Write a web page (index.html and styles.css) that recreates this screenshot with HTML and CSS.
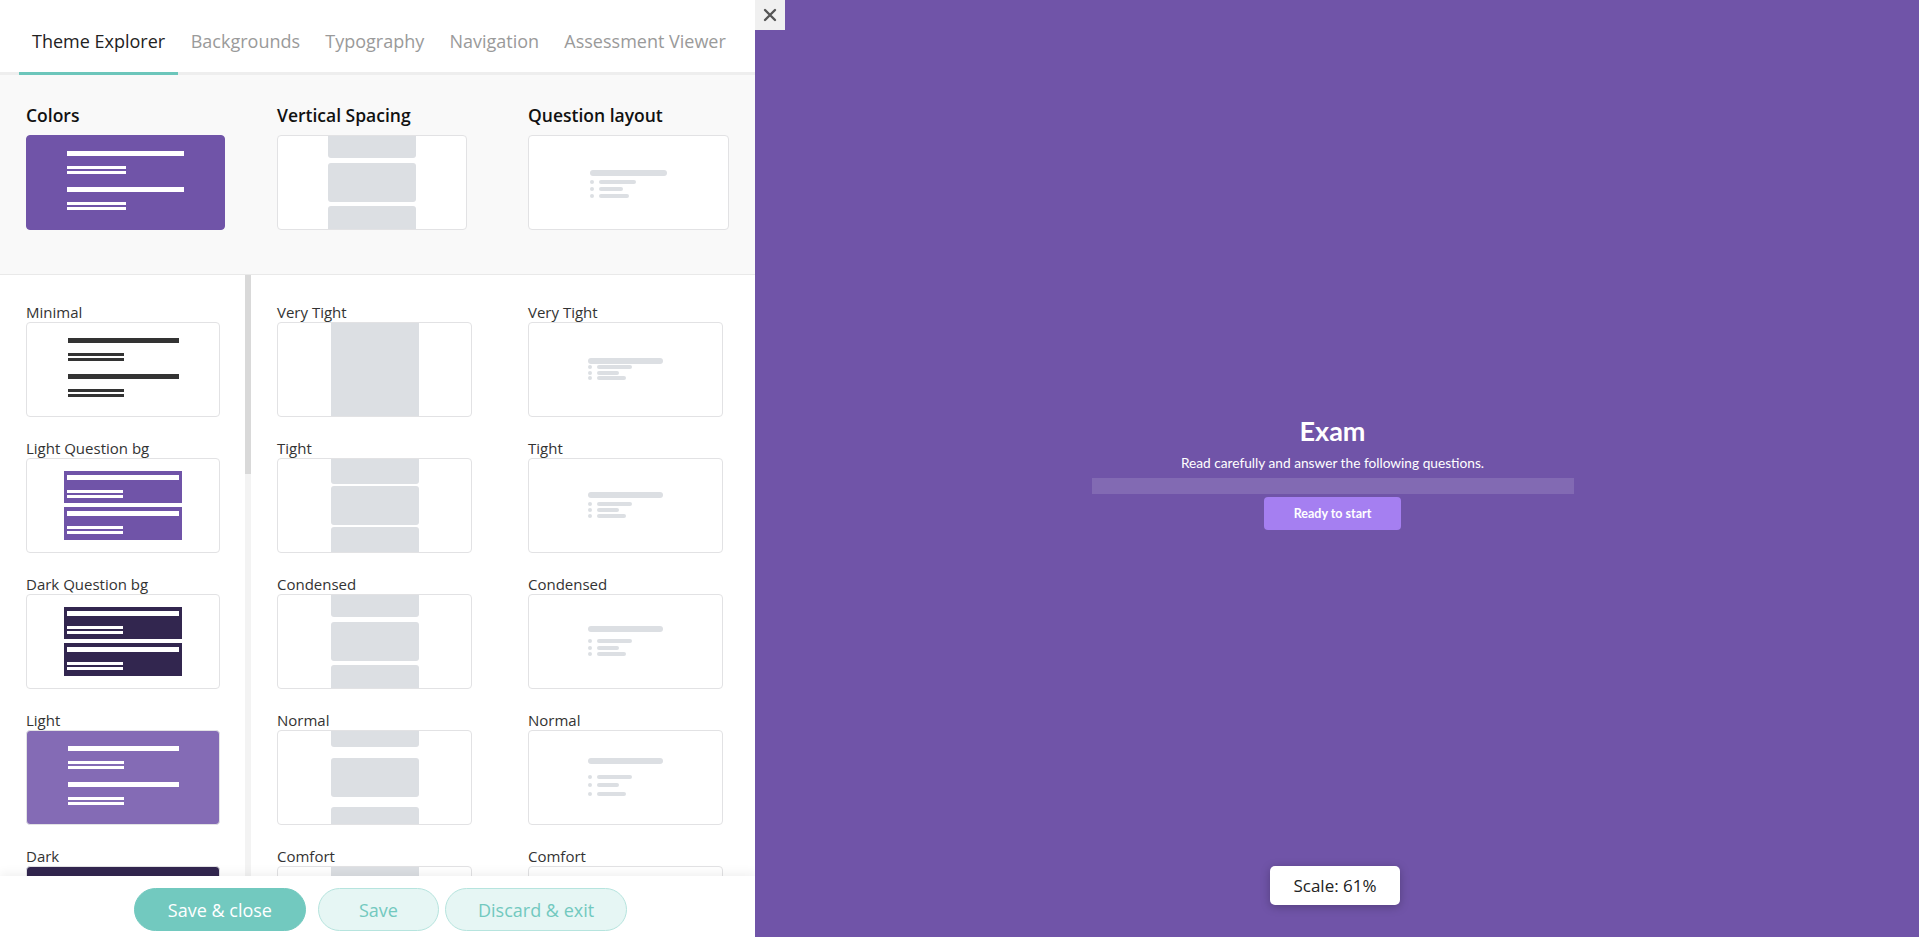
FILE: index.html
```html
<!DOCTYPE html>
<html lang="en">
<head>
<meta charset="utf-8">
<title>Theme Explorer</title>
<link rel="stylesheet" href="styles.css">
</head>
<body>
<div class="app">
  <aside class="editor">
    <nav class="tabs">
      <a class="tab active">Theme Explorer</a>
      <a class="tab">Backgrounds</a>
      <a class="tab">Typography</a>
      <a class="tab">Navigation</a>
      <a class="tab">Assessment Viewer</a>
    </nav>

    <section class="current">
      <div class="cur-col">
        <h3 class="cur-title">Colors</h3>
        <div class="thumb thumb-c1 bg-purple"><div class="lines lines-wide"><div class="para"><i class="l-long"></i><i class="l-short"></i><i class="l-short"></i></div><div class="para"><i class="l-long"></i><i class="l-short"></i><i class="l-short"></i></div></div></div>
      </div>
      <div class="cur-col">
        <h3 class="cur-title">Vertical Spacing</h3>
        <div class="thumb thumb-c2 vs vs-condensed"><i class="blk"></i><i class="blk"></i><i class="blk"></i></div>
      </div>
      <div class="cur-col">
        <h3 class="cur-title">Question layout</h3>
        <div class="thumb thumb-c3 ql ql-top"><div class="ql-in"><i class="ql-bar"></i><div class="ql-row"><i class="dot"></i><i class="rb rb1"></i></div><div class="ql-row"><i class="dot"></i><i class="rb rb2"></i></div><div class="ql-row"><i class="dot"></i><i class="rb rb3"></i></div></div></div>
      </div>
    </section>

    <div class="options">
      <div class="colors-list">
        <div class="opt"><div class="opt-label">Minimal</div><div class="thumb dark-lines"><div class="lines"><div class="para"><i class="l-long"></i><i class="l-short"></i><i class="l-short"></i></div><div class="para"><i class="l-long"></i><i class="l-short"></i><i class="l-short"></i></div></div></div></div>
        <div class="opt"><div class="opt-label">Light Question bg</div><div class="thumb qbg"><div class="qblock bq-purple"><i class="l-long"></i><i class="l-short"></i><i class="l-short"></i></div><div class="qblock bq-purple"><i class="l-long"></i><i class="l-short"></i><i class="l-short"></i></div></div></div>
        <div class="opt"><div class="opt-label">Dark Question bg</div><div class="thumb qbg"><div class="qblock bq-dark"><i class="l-long"></i><i class="l-short"></i><i class="l-short"></i></div><div class="qblock bq-dark"><i class="l-long"></i><i class="l-short"></i><i class="l-short"></i></div></div></div>
        <div class="opt"><div class="opt-label">Light</div><div class="thumb bg-light"><div class="lines"><div class="para"><i class="l-long"></i><i class="l-short"></i><i class="l-short"></i></div><div class="para"><i class="l-long"></i><i class="l-short"></i><i class="l-short"></i></div></div></div></div>
        <div class="opt"><div class="opt-label">Dark</div><div class="thumb bg-dark"><div class="lines"><div class="para"><i class="l-long"></i><i class="l-short"></i><i class="l-short"></i></div><div class="para"><i class="l-long"></i><i class="l-short"></i><i class="l-short"></i></div></div></div></div>
      </div>
      <div class="scroll-track"><div class="scroll-thumb"></div></div>

      <div class="opt-grid">
        <div class="opt"><div class="opt-label">Very Tight</div><div class="thumb thumb-r vs vs-verytight"><i class="blk"></i><i class="blk"></i><i class="blk"></i></div></div>
        <div class="opt"><div class="opt-label">Very Tight</div><div class="thumb thumb-r ql ql-verytight"><div class="ql-in"><i class="ql-bar"></i><div class="ql-row"><i class="dot"></i><i class="rb rb1"></i></div><div class="ql-row"><i class="dot"></i><i class="rb rb2"></i></div><div class="ql-row"><i class="dot"></i><i class="rb rb3"></i></div></div></div></div>

        <div class="opt"><div class="opt-label">Tight</div><div class="thumb thumb-r vs vs-tight"><i class="blk"></i><i class="blk"></i><i class="blk"></i></div></div>
        <div class="opt"><div class="opt-label">Tight</div><div class="thumb thumb-r ql ql-tight"><div class="ql-in"><i class="ql-bar"></i><div class="ql-row"><i class="dot"></i><i class="rb rb1"></i></div><div class="ql-row"><i class="dot"></i><i class="rb rb2"></i></div><div class="ql-row"><i class="dot"></i><i class="rb rb3"></i></div></div></div></div>

        <div class="opt"><div class="opt-label">Condensed</div><div class="thumb thumb-r vs vs-condensed"><i class="blk"></i><i class="blk"></i><i class="blk"></i></div></div>
        <div class="opt"><div class="opt-label">Condensed</div><div class="thumb thumb-r ql ql-condensed"><div class="ql-in"><i class="ql-bar"></i><div class="ql-row"><i class="dot"></i><i class="rb rb1"></i></div><div class="ql-row"><i class="dot"></i><i class="rb rb2"></i></div><div class="ql-row"><i class="dot"></i><i class="rb rb3"></i></div></div></div></div>

        <div class="opt"><div class="opt-label">Normal</div><div class="thumb thumb-r vs vs-normal"><i class="blk"></i><i class="blk"></i><i class="blk"></i></div></div>
        <div class="opt"><div class="opt-label">Normal</div><div class="thumb thumb-r ql ql-normal"><div class="ql-in"><i class="ql-bar"></i><div class="ql-row"><i class="dot"></i><i class="rb rb1"></i></div><div class="ql-row"><i class="dot"></i><i class="rb rb2"></i></div><div class="ql-row"><i class="dot"></i><i class="rb rb3"></i></div></div></div></div>

        <div class="opt"><div class="opt-label">Comfort</div><div class="thumb thumb-r vs vs-comfort"><i class="blk"></i><i class="blk"></i><i class="blk"></i></div></div>
        <div class="opt"><div class="opt-label">Comfort</div><div class="thumb thumb-r ql ql-comfort"><div class="ql-in"><i class="ql-bar"></i><div class="ql-row"><i class="dot"></i><i class="rb rb1"></i></div><div class="ql-row"><i class="dot"></i><i class="rb rb2"></i></div><div class="ql-row"><i class="dot"></i><i class="rb rb3"></i></div></div></div></div>
      </div>
    </div>

    <footer class="actions">
      <button class="btn btn-primary">Save &amp; close</button>
      <button class="btn btn-light btn-save">Save</button>
      <button class="btn btn-light">Discard &amp; exit</button>
    </footer>
  </aside>

  <main class="preview">
    <button class="close" aria-label="Close">
      <svg width="14" height="14" viewBox="0 0 14 14"><path d="M2 2 L12 12 M12 2 L2 12" stroke="#555" stroke-width="2.4" stroke-linecap="round"/></svg>
    </button>
    <div class="intro">
      <h1 class="exam-title">Exam</h1>
      <p class="exam-sub">Read carefully and answer the following questions.</p>
      <div class="progress"></div>
      <button class="start">Ready to start</button>
    </div>
    <div class="scale">Scale: 61%</div>
  </main>
</div>
</body>
</html>
```

FILE: styles.css
```css
* { box-sizing: border-box; }
html, body { margin: 0; padding: 0; height: 100%; }
body {
  font-family: "Open Sans", "Noto Sans", sans-serif;
  color: #222;
  overflow: hidden;
}
.app { display: flex; height: 100vh; }

/* ---------- editor panel ---------- */
.editor {
  width: 755px;
  flex: none;
  display: flex;
  flex-direction: column;
  background: #fff;
  height: 100%;
}
.tabs {
  display: flex;
  padding-left: 19px;
  border-bottom: 3px solid #eeeeee;
  background: #fff;
  flex: none;
}
.tab {
  font-size: 18px;
  line-height: 24.5px;
  padding: 29px 12.6px 18px;
  color: #9a9a9a;
  border-bottom: 3px solid transparent;
  margin-bottom: -3px;
  cursor: pointer;
}
.tab.active { color: #222; border-bottom-color: #6cc6bb; padding: 29px 13px 18px; }

.current {
  flex: none;
  display: grid;
  grid-template-columns: 251px 251px 251px;
  background: #f9f9f9;
  padding: 28px 0 44px;
  border-bottom: 1px solid #e9e9e9;
}
.cur-col { padding-left: 26px; }
.cur-title {
  margin: 0 0 8px;
  font-size: 17.5px;
  font-weight: 600;
  line-height: 24px;
  color: #111;
}

/* ---------- thumbnails ---------- */
.thumb {
  width: 194px;
  height: 95px;
  border: 1px solid #e2e2e4;
  border-radius: 4px;
  background: #fff;
  overflow: hidden;
  color: #fff;
}
.thumb-c1 { width: 199px; }
.thumb-c2 { width: 190px; }
.thumb-c3 { width: 201px; }
.thumb-r { width: 195px; }

.bg-purple { background: #7054a8; border-color: #7054a8; }
.bg-light { background: #846bb5; border-color: #e2e2e4; }
.bg-dark { background: #32264f; border-color: #e2e2e4; }
.dark-lines { color: #333; }

.lines { width: 111px; margin: 15px auto 0; }
.lines-wide { width: 117px; }
.para { display: flex; flex-direction: column; }
.para + .para { margin-top: 13px; }
.l-long { display: block; height: 5px; background: currentColor; }
.l-short { display: block; width: 56px; height: 3px; background: currentColor; margin-top: 2px; }
.l-long + .l-short { margin-top: 10px; }
.lines-wide .l-short { width: 59px; }

.qbg { display: flex; flex-direction: column; align-items: center; padding-top: 12px; gap: 4px; }
.qblock { width: 118px; height: 32.5px; padding: 4px 3px 0; color: #fff; }
.bq-purple { background: #7054a8; }
.bq-dark { background: #32264f; }

/* vertical spacing */
.vs {
  display: flex;
  flex-direction: column;
  align-items: center;
  justify-content: center;
}
.blk {
  display: block;
  flex: none;
  width: 88px;
  height: 39px;
  background: #dcdfe3;
  border-radius: 3px;
}
.vs-verytight { gap: 0; }
.vs-verytight .blk { border-radius: 0; }
.vs-tight { gap: 2px; }
.vs-condensed { gap: 4.6px; }
.vs-normal { gap: 10.5px; }
.vs-comfort { gap: 16px; }

/* question layout */
.ql { display: flex; align-items: center; justify-content: center; }
.ql-in { width: 75px; display: flex; flex-direction: column; }
.ql-top .ql-in { width: 77px; margin-top: 4px; }
.ql-bar { display: block; height: 6px; border-radius: 3px; background: #dcdfe3; }
.ql-row { display: flex; align-items: center; gap: 4.6px; height: 4px; }
.dot { display: block; width: 4px; height: 4px; border-radius: 50%; background: #dcdfe3; }
.rb { display: block; height: 4px; border-radius: 2px; background: #dcdfe3; }
.rb1 { width: 35px; }
.rb2 { width: 22px; }
.rb3 { width: 29px; }
.ql-top .rb1 { width: 37px; }
.ql-top .rb2 { width: 24px; }
.ql-top .rb3 { width: 30px; }

.ql-verytight .ql-bar { margin-bottom: 1.5px; }
.ql-verytight .ql-row + .ql-row { margin-top: 1.3px; }
.ql-tight .ql-bar { margin-bottom: 4.5px; }
.ql-tight .ql-row + .ql-row { margin-top: 2px; }
.ql-condensed .ql-bar { margin-bottom: 7.6px; }
.ql-condensed .ql-row + .ql-row { margin-top: 2.7px; }
.ql-top .ql-bar { margin-bottom: 4.3px; }
.ql-top .ql-row + .ql-row { margin-top: 2.7px; }
.ql-normal .ql-bar { margin-bottom: 10.3px; }
.ql-normal .ql-row + .ql-row { margin-top: 4.5px; }
.ql-comfort .ql-bar { margin-bottom: 13px; }
.ql-comfort .ql-row + .ql-row { margin-top: 6px; }

/* ---------- option lists ---------- */
.options {
  flex: 1;
  min-height: 0;
  display: flex;
  background: #fff;
}
.colors-list {
  width: 245px;
  flex: none;
  overflow: hidden;
  padding-top: 27px;
}
.scroll-track {
  width: 6px;
  flex: none;
  background: #f3f3f3;
}
.scroll-thumb {
  height: 199px;
  background: #d9d9d9;
}

.opt-grid {
  flex: 1;
  overflow: hidden;
  display: grid;
  grid-template-columns: 251px 251px;
  align-content: start;
  padding-top: 27px;
}
.opt { padding-left: 26px; margin-bottom: 21px; }
.opt-label {
  font-size: 15px;
  line-height: 20px;
  color: #333;
}

/* ---------- footer ---------- */
.actions {
  flex: none;
  height: 61px;
  display: flex;
  justify-content: center;
  align-items: flex-start;
  padding: 12px 0 0 6px;
  background: #fff;
  box-shadow: 0 -3px 10px rgba(0, 0, 0, 0.06);
  position: relative;
}
.btn {
  height: 43px;
  border-radius: 22px;
  padding: 0 32px;
  font-family: inherit;
  font-size: 18px;
  border: 1px solid transparent;
  cursor: pointer;
}
.btn-primary { background: #72c9bf; border-color: #72c9bf; color: #fff; margin-right: 12px; padding: 0 33px; }
.btn-light { background: #e6f6f4; border-color: #b6e4de; color: #72c9bf; }
.btn-save { min-width: 121px; margin-right: 6px; }

/* ---------- preview ---------- */
.preview {
  flex: 1;
  position: relative;
  background: #7054a8;
  display: flex;
  align-items: center;
  justify-content: center;
  padding: 7px 9px 0 0;
}
.close {
  position: absolute;
  left: 0;
  top: 0;
  width: 30px;
  height: 30px;
  padding: 0;
  border: none;
  background: #f0f0f0;
  display: flex;
  align-items: center;
  justify-content: center;
  cursor: pointer;
}
.intro {
  width: 482px;
  display: flex;
  flex-direction: column;
  align-items: center;
  color: #fff;
  font-family: Lato, "Open Sans", sans-serif;
}
.exam-title {
  margin: 0;
  font-size: 27px;
  font-weight: 700;
  line-height: 32px;
}
.exam-sub {
  margin: 8px 0 0;
  font-size: 13.7px;
  line-height: 16px;
}
.progress {
  width: 482px;
  height: 16px;
  margin-top: 7px;
  background: rgba(255, 255, 255, 0.13);
}
.start {
  margin-top: 3px;
  width: 137px;
  height: 33px;
  border: none;
  border-radius: 4px;
  background: #a57ff1;
  color: #fff;
  font-family: Lato, "Open Sans", sans-serif;
  font-weight: 700;
  font-size: 12.5px;
  cursor: pointer;
}
.scale {
  position: absolute;
  bottom: 32px;
  left: 50%;
  transform: translateX(-50%);
  margin-left: -2px;
  width: 130px;
  height: 39px;
  background: #fff;
  border-radius: 5px;
  box-shadow: 0 2px 10px rgba(0, 0, 0, 0.25);
  font-size: 17px;
  line-height: 39px;
  text-align: center;
  color: #222;
}
```
